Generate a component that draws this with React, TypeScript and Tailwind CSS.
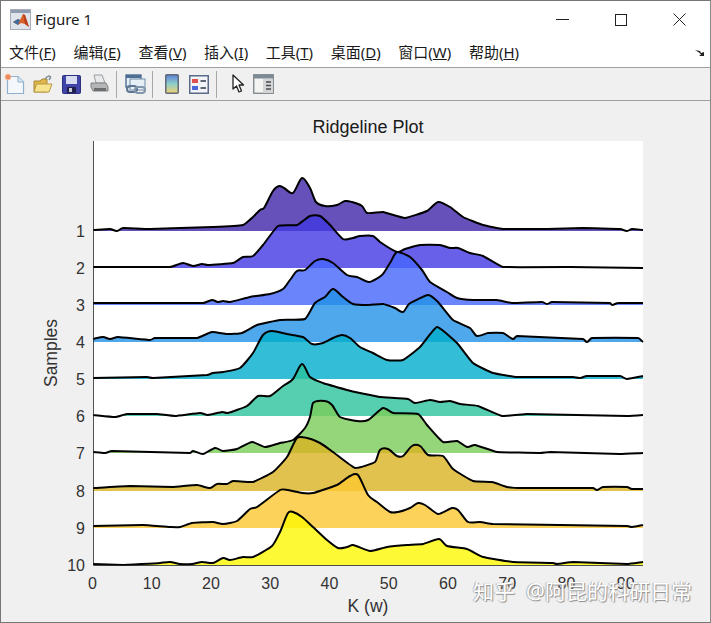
const ridges = [
  { base: 231, fill: "#3e26a8", pts: "93,230 110,229 117,231 123,228 150,229 180,228 213,227 243,225 253,217 260,210 264,208 273,191 279,186 284,188 293,193 302,178 310,188 316,202 325,206 337,205 345,201 352,202 362,206 367,213 383,212 405,218 427,211 438,202 450,207 463,217 483,225 503,229 547,229 583,228 620,229 627,231 632,229 643,230" },
  { base: 268, fill: "#4238e2", pts: "93,267 170,267 183,263 193,266 202,264 208,265 233,263 243,257 253,256 263,245 278,226 297,225 310,216 320,216 330,225 343,239 353,238 360,236 373,236 380,242 397,252 405,249 420,245 440,245 450,248 458,248 470,253 483,256 503,267 570,267 643,268" },
  { base: 305, fill: "#4565fb", pts: "93,303 110,303 203,303 212,300 218,302 223,301 230,302 250,297 270,294 283,289 290,280 297,271 305,270 315,261 323,259 333,263 347,275 357,277 369,282 382,275 390,263 397,252 410,257 422,270 430,282 447,292 457,298 473,300 497,300 512,303 542,302 547,304 552,302 610,303 612,305 618,303 643,303" },
  { base: 342, fill: "#2392e7", pts: "93,339 103,337 110,339 118,337 150,340 155,338 197,338 212,332 227,334 242,333 257,325 280,320 305,319 315,303 325,297 333,289 343,297 353,304 369,305 383,304 395,308 403,312 409,304 428,295 438,302 453,320 470,328 477,336 488,333 503,333 513,339 517,336 583,339 587,342 592,338 638,338 643,342" },
  { base: 379, fill: "#00accc", pts: "93,378 147,377 153,378 207,375 213,373 223,372 240,368 253,353 263,335 272,331 287,334 303,337 312,344 323,343 333,338 342,335 350,338 360,347 373,353 387,360 403,360 420,347 437,327 457,343 473,363 493,373 517,377 573,377 580,378 587,376 620,376 627,379 643,376" },
  { base: 416, fill: "#2ac39c", pts: "93,415 115,417 127,414 157,414 175,416 200,413 208,415 222,412 228,413 247,406 258,396 270,396 283,386 293,379 302,364 310,377 323,383 347,390 360,393 380,397 408,399 415,403 430,400 440,402 450,401 460,404 478,406 502,416 527,414 627,416 643,415" },
  { base: 453, fill: "#7acc59", pts: "93,452 105,453 112,451 190,453 193,451 203,454 215,448 223,451 237,449 252,442 265,447 280,443 293,440 305,428 310,417 313,403 325,401 332,405 340,417 357,421 368,420 383,408 393,413 418,414 427,425 443,442 457,441 467,447 475,445 497,452 540,453 550,452 620,454 643,453" },
  { base: 491, fill: "#dbb322", pts: "93,488 130,486 173,487 197,485 210,488 217,484 227,484 233,481 253,482 273,472 287,457 297,438 307,438 320,443 333,452 355,468 375,462 380,450 388,449 397,456 403,456 412,446 420,446 428,455 443,456 453,469 473,481 492,482 507,487 523,488 593,488 597,490 603,487 627,487 632,489 643,489" },
  { base: 528, fill: "#fcc731", pts: "93,526 143,525 170,527 180,527 192,523 213,522 223,524 237,521 250,509 257,507 280,490 288,490 302,493 313,493 337,485 350,476 358,475 368,495 377,502 390,512 398,512 410,508 418,503 425,505 438,514 452,508 458,510 468,522 480,522 493,524 627,526 632,527 643,525" },
  { base: 565, fill: "#fcf703", pts: "93,564 123,565 160,563 170,562 180,564 192,564 202,562 213,563 223,558 230,560 243,557 253,557 272,546 280,532 288,513 293,512 302,517 313,527 327,540 338,548 347,547 353,545 370,551 387,547 407,545 423,544 439,539 447,546 467,549 483,557 513,562 553,563 557,564 573,562 627,564 643,562" },
];

const menus = [
  ["文件(", "F", ")"],
  ["编辑(", "E", ")"],
  ["查看(", "V", ")"],
  ["插入(", "I", ")"],
  ["工具(", "T", ")"],
  ["桌面(", "D", ")"],
  ["窗口(", "W", ")"],
  ["帮助(", "H", ")"],
];

const xTicks = [0, 10, 20, 30, 40, 50, 60, 70, 80, 90];

// rounds the corners of the digitised curve a little
function smoothPath(pts: string) {
  const p = pts.split(" ").map((s) => s.split(",").map(Number));
  let d = `${p[0][0]},${p[0][1]}`;
  for (let i = 0; i < p.length - 1; i++) {
    const p0 = p[Math.max(i - 1, 0)];
    const p1 = p[i];
    const p2 = p[i + 1];
    const p3 = p[Math.min(i + 2, p.length - 1)];
    const seg = p2[0] - p1[0];
    const k0 = (p2[1] - p0[1]) / Math.max(p2[0] - p0[0], 1);
    const k1 = (p3[1] - p1[1]) / Math.max(p3[0] - p1[0], 1);
    const h = Math.min(seg / 3, 2.5);
    d += ` C${p1[0] + h},${(p1[1] + k0 * h).toFixed(1)} ${p2[0] - h},${(p2[1] - k1 * h).toFixed(1)} ${p2[0]},${p2[1]}`;
  }
  return d;
}

function MatlabIcon() {
  return (
    <svg width="21" height="21" viewBox="0 0 21 21">
      <rect x="0.5" y="0.5" width="20" height="20" fill="#dfe3ea" stroke="#a9aeb6" />
      <rect x="1" y="1" width="19" height="3" fill="#8f9bb0" />
      <path d="M3 13 L8 10 L10 11 L13 5 L15 6 L19 18 L15 15 L11 14 L8 16 Z" fill="#d9622b" />
      <path d="M3 13 L8 10 L10 11 L8 16 Z" fill="#3d6f9e" />
      <path d="M13 5 L15 6 L19 18 L15 15 Z" fill="#b8401c" />
    </svg>
  );
}

function Separator() {
  return <div className="w-px h-[27px] bg-[#a8a8a8]" />;
}

function Toolbar() {
  return (
    <div className="h-[33px] flex items-center pl-[3px] border-b border-[#a0a0a0] bg-[#f0f0f0]">
      {/* new */}
      <svg width="21" height="22" viewBox="0 0 21 22" className="mr-[8px]">
        <path d="M3.5 3.5 H14 L19.5 9 V20.5 H3.5 Z" fill="#f4f8fc" stroke="#8fb0cc" strokeWidth="1.2" />
        <path d="M14 3.5 V9 H19.5" fill="#d7e6f2" stroke="#8fb0cc" />
        <circle cx="4" cy="4" r="3" fill="#ec8a5e" stroke="#f6c2a5" />
      </svg>
      {/* open */}
      <svg width="20" height="20" viewBox="0 0 20 20" className="mr-[9px]">
        <path d="M1 7 H7 L9 5 H14 V18 H1 Z" fill="#e0b54a" stroke="#a88a3a" />
        <path d="M1 18 L3.5 10 H19 L16 18 Z" fill="#f8e48e" stroke="#b89a44" />
        <path d="M12 5 Q15 1 18 3 M18 3 L15.5 1.5 M18 3 L16 6" fill="none" stroke="#7f8f98" strokeWidth="1.4" />
      </svg>
      {/* save */}
      <svg width="19" height="19" viewBox="0 0 19 19" className="mr-[9px]">
        <rect x="0.5" y="0.5" width="18" height="18" rx="1" fill="#3f45a8" stroke="#2b2f80" />
        <rect x="4" y="1" width="11" height="8" fill="#d8dcf0" />
        <rect x="5" y="12" width="9" height="6" fill="#20204a" />
        <rect x="7" y="13" width="3" height="4" fill="#c8ccd8" />
      </svg>
      {/* print */}
      <svg width="19" height="20" viewBox="0 0 19 20" className="mr-[7px]">
        <path d="M4 1 H12 L15 9 H6 Z" fill="#e8eaec" stroke="#9a9ea2" />
        <path d="M1 9 H16 L18 13 V17 H3 L1 13 Z" fill="#b4b6b8" stroke="#7e8082" />
        <rect x="4" y="14" width="12" height="3" fill="#6a6c6e" />
      </svg>
      <Separator />
      {/* link */}
      <svg width="21" height="21" viewBox="0 0 21 21" className="ml-[8px] mr-[6px]">
        <rect x="1" y="1" width="15" height="12" fill="#e6eef6" stroke="#4d6f94" strokeWidth="1.4" />
        <rect x="1" y="1" width="15" height="3" fill="#4d6f94" />
        <rect x="5" y="5" width="15" height="11" fill="#e6eef6" stroke="#6f8aa8" />
        <rect x="2" y="12" width="10" height="6" rx="3" fill="none" stroke="#5b7690" strokeWidth="2" />
        <rect x="10" y="13" width="10" height="6" rx="3" fill="none" stroke="#8297ab" strokeWidth="2" />
      </svg>
      <Separator />
      {/* colorbar */}
      <svg width="14" height="20" viewBox="0 0 14 20" className="ml-[12px] mr-[10px]">
        <defs>
          <linearGradient id="cbar" x1="0" y1="0" x2="0" y2="1">
            <stop offset="0" stopColor="#5a80d8" />
            <stop offset="0.5" stopColor="#8fd0c8" />
            <stop offset="1" stopColor="#f4d070" />
          </linearGradient>
        </defs>
        <rect x="0.75" y="0.75" width="12.5" height="18.5" rx="1" fill="url(#cbar)" stroke="#606a78" strokeWidth="1.5" />
      </svg>
      {/* legend */}
      <svg width="20" height="19" viewBox="0 0 20 19" className="mr-[7px]">
        <rect x="0.75" y="0.75" width="18.5" height="17.5" fill="#f2f4f8" stroke="#5a6a88" strokeWidth="1.5" />
        <rect x="3" y="4" width="6" height="4" fill="#e05050" />
        <rect x="3" y="11" width="6" height="4" fill="#4a68d8" />
        <path d="M11.5 6 H17 M11.5 13 H17" stroke="#303848" strokeWidth="1.5" />
      </svg>
      <Separator />
      {/* arrow */}
      <svg width="14" height="20" viewBox="0 0 14 20" className="ml-[14px] mr-[8px]">
        <path d="M2 1 V15 L5.5 12 L8 18 L10.5 17 L8 11 H12.5 Z" fill="#fff" stroke="#222" strokeWidth="1.3" strokeLinejoin="round" />
      </svg>
      {/* property panel */}
      <svg width="21" height="20" viewBox="0 0 21 20">
        <rect x="0.75" y="0.75" width="19.5" height="18.5" fill="#f4f4f2" stroke="#7c8288" strokeWidth="1.3" />
        <rect x="1" y="1" width="19" height="3.5" fill="#7c8a96" />
        <rect x="10" y="5" width="10" height="14" fill="#d4d6d6" />
        <path d="M13 8 H18 M13 11.5 H18 M13 15 H18" stroke="#484c50" strokeWidth="1.6" />
      </svg>
    </div>
  );
}

function RidgelinePlot() {
  return (
    <svg width="709" height="521" viewBox="1 101 709 521" className="block">
      <rect x="93" y="141" width="550" height="424" fill="#ffffff" />
      {ridges.map((r) => {
        const d = smoothPath(r.pts);
        return (
          <g key={r.base}>
            <path d={`M93,${r.base} L${d} L643,${r.base} Z`} fill={r.fill} fillOpacity="0.8" />
            <path d={`M${d}`} fill="none" stroke="#000000" strokeWidth="2" strokeLinejoin="round" />
          </g>
        );
      })}
      <path d="M93.5 141 V565.5 H643" fill="none" stroke="#262626" strokeWidth="0.8" />
      <g fontFamily="'Liberation Sans', Arial, sans-serif" fill="#333333">
        <text x="368" y="133" textAnchor="middle" fontSize="18" fill="#1a1a1a">Ridgeline Plot</text>
        {ridges.map((r, i) => (
          <text key={r.base} x="85" y={r.base + 6} textAnchor="end" fontSize="16">{i + 1}</text>
        ))}
        {xTicks.map((t) => (
          <text key={t} x={92.5 + t * 5.925} y="589" textAnchor="middle" fontSize="16">{t}</text>
        ))}
        <text x="368" y="612" textAnchor="middle" fontSize="17.5">K (w)</text>
        <text transform="translate(57 353) rotate(-90)" textAnchor="middle" fontSize="17.5">Samples</text>
      </g>
    </svg>
  );
}

export default function App() {
  return (
    <div className="relative w-[711px] h-[623px] overflow-hidden bg-[#f0f0f0] border border-[#767676] border-r-[#8a8a8a] font-['Noto_Sans','Noto_Sans_CJK_SC',sans-serif] text-[#1a1a1a]">
      {/* Title bar */}
      <div className="h-[37px] bg-white flex items-center pl-[9px]">
        <MatlabIcon />
        <span className="ml-[4px] text-[15px] leading-none">Figure 1</span>
        <div className="ml-auto flex items-center pr-[24px] gap-[46px]">
          <div className="w-[13px] h-px bg-[#222]" />
          <div className="w-[12px] h-[12px] border border-[#222]" />
          <svg width="13" height="13" viewBox="0 0 13 13">
            <path d="M0.5 0.5 L12.5 12.5 M12.5 0.5 L0.5 12.5" stroke="#222" strokeWidth="1" />
          </svg>
        </div>
      </div>

      {/* Menu bar */}
      <div className="h-[30px] bg-white flex items-center pl-[8px] pr-[5px] gap-[17.6px] border-b border-[#a0a0a0] text-[15px]">
        {menus.map(([a, b, c]) => (
          <span key={a} className="leading-none whitespace-nowrap">
            {a}
            <span className="underline">{b}</span>
            {c}
          </span>
        ))}
        <svg width="10" height="8" viewBox="0 0 10 8" className="ml-auto">
          <path d="M0 1 L5 2 L6 4 L9 3 L9 7 L4 7 L6 5.5 L4 3.5 Z" fill="#222" />
        </svg>
      </div>

      <Toolbar />
      <RidgelinePlot />

      {/* Watermark */}
      <div className="absolute left-[472px] top-[580px] text-[21px] leading-none whitespace-nowrap text-white [text-shadow:1px_1px_1px_#8c8c8c,-1px_0_1px_#b0b0b0]">
        知乎<span className="ml-[11px]">@阿昆的科研日常</span>
      </div>
    </div>
  );
}
